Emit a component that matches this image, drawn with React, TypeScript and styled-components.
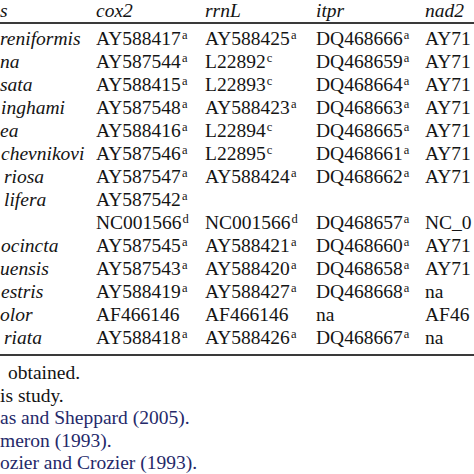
import React from "react";
import styled, { createGlobalStyle, css } from "styled-components";

const GlobalStyle = createGlobalStyle`
  html, body {
    margin: 0;
    padding: 0;
    background: #ffffff;
  }
  body {
    font-family: "Liberation Serif", "Times New Roman", serif;
    color: #141414;
  }
`;

const columns = css`
  display: grid;
  grid-template-columns: 96px 109px 111px 109px 49px;
`;

const Page = styled.div`
  width: 474px;
  height: 474px;
  overflow: hidden;
  background: #ffffff;
  white-space: nowrap;
`;

const Table = styled.div`
  font-size: 19.5px;
`;

const HeadRow = styled.div`
  ${columns};
  height: 22px;
  align-items: end;
  font-style: italic;
  border-bottom: 2px solid #3a3a3a;
`;

const HeadCell = styled.div`
  line-height: 22px;
  padding-bottom: 2px;
`;

const Body = styled.div`
  padding: 3px 0 5px;
  border-bottom: 2px solid #3a3a3a;
`;

const Row = styled.div`
  ${columns};
  height: 23px;
  line-height: 23px;
`;

const Species = styled.div<{ $indent: number }>`
  font-style: italic;
  overflow: hidden;
  padding-left: ${(p) => p.$indent}px;
`;

const Cell = styled.div`
  overflow: hidden;
`;

const Sup = styled.sup`
  font-size: 12.5px;
  line-height: 0;
  vertical-align: 6px;
  margin-left: 1px;
`;

const Notes = styled.div`
  padding-top: 6px;
  font-size: 19.5px;
`;

const Note = styled.p<{ $link?: boolean; $indent: number }>`
  margin: 0;
  line-height: 22.5px;
  padding-left: ${(p) => p.$indent}px;
  color: ${(p) => (p.$link ? "#25296a" : "#141414")};
`;

type Code = [string, string?] | null;

interface Entry {
  species: string;
  indent: number;
  codes: Code[];
}

const rows: Entry[] = [
  { species: "reniformis", indent: 0, codes: [["AY588417", "a"], ["AY588425", "a"], ["DQ468666", "a"], ["AY71"]] },
  { species: "na", indent: 0, codes: [["AY587544", "a"], ["L22892", "c"], ["DQ468659", "a"], ["AY71"]] },
  { species: "sata", indent: 0, codes: [["AY588415", "a"], ["L22893", "c"], ["DQ468664", "a"], ["AY71"]] },
  { species: "inghami", indent: 1, codes: [["AY587548", "a"], ["AY588423", "a"], ["DQ468663", "a"], ["AY71"]] },
  { species: "ea", indent: 0, codes: [["AY588416", "a"], ["L22894", "c"], ["DQ468665", "a"], ["AY71"]] },
  { species: "chevnikovi", indent: 1, codes: [["AY587546", "a"], ["L22895", "c"], ["DQ468661", "a"], ["AY71"]] },
  { species: "riosa", indent: 4, codes: [["AY587547", "a"], ["AY588424", "a"], ["DQ468662", "a"], ["AY71"]] },
  { species: "lifera", indent: 4, codes: [["AY587542", "a"], null, null, null] },
  { species: "", indent: 0, codes: [["NC001566", "d"], ["NC001566", "d"], ["DQ468657", "a"], ["NC_0"]] },
  { species: "ocincta", indent: 1, codes: [["AY587545", "a"], ["AY588421", "a"], ["DQ468660", "a"], ["AY71"]] },
  { species: "uensis", indent: 0, codes: [["AY587543", "a"], ["AY588420", "a"], ["DQ468658", "a"], ["AY71"]] },
  { species: "estris", indent: 1, codes: [["AY588419", "a"], ["AY588427", "a"], ["DQ468668", "a"], ["na"]] },
  { species: "olor", indent: 0, codes: [["AF466146"], ["AF466146"], ["na"], ["AF46"]] },
  { species: "riata", indent: 4, codes: [["AY588418", "a"], ["AY588426", "a"], ["DQ468667", "a"], ["na"]] },
];

const notes = [
  { text: "obtained.", indent: 8, link: false },
  { text: "is study.", indent: 0, link: false },
  { text: "as and Sheppard (2005).", indent: 0, link: true },
  { text: "meron (1993).", indent: 0, link: true },
  { text: "ozier and Crozier (1993).", indent: 0, link: true },
];

const App: React.FC = () => {
  return (
    <>
      <GlobalStyle />
      <Page>
        <Table>
          <HeadRow>
            <HeadCell>s</HeadCell>
            <HeadCell>cox2</HeadCell>
            <HeadCell>rrnL</HeadCell>
            <HeadCell>itpr</HeadCell>
            <HeadCell>nad2</HeadCell>
          </HeadRow>
          <Body>
            {rows.map((row, i) => (
              <Row key={i}>
                <Species $indent={row.indent}>{row.species}</Species>
                {row.codes.map((code, j) => (
                  <Cell key={j}>
                    {code && (
                      <>
                        {code[0]}
                        {code[1] && <Sup>{code[1]}</Sup>}
                      </>
                    )}
                  </Cell>
                ))}
              </Row>
            ))}
          </Body>
        </Table>
        <Notes>
          {notes.map((n, i) => (
            <Note key={i} $indent={n.indent} $link={n.link}>
              {n.text}
            </Note>
          ))}
        </Notes>
      </Page>
    </>
  );
};

export default App;
